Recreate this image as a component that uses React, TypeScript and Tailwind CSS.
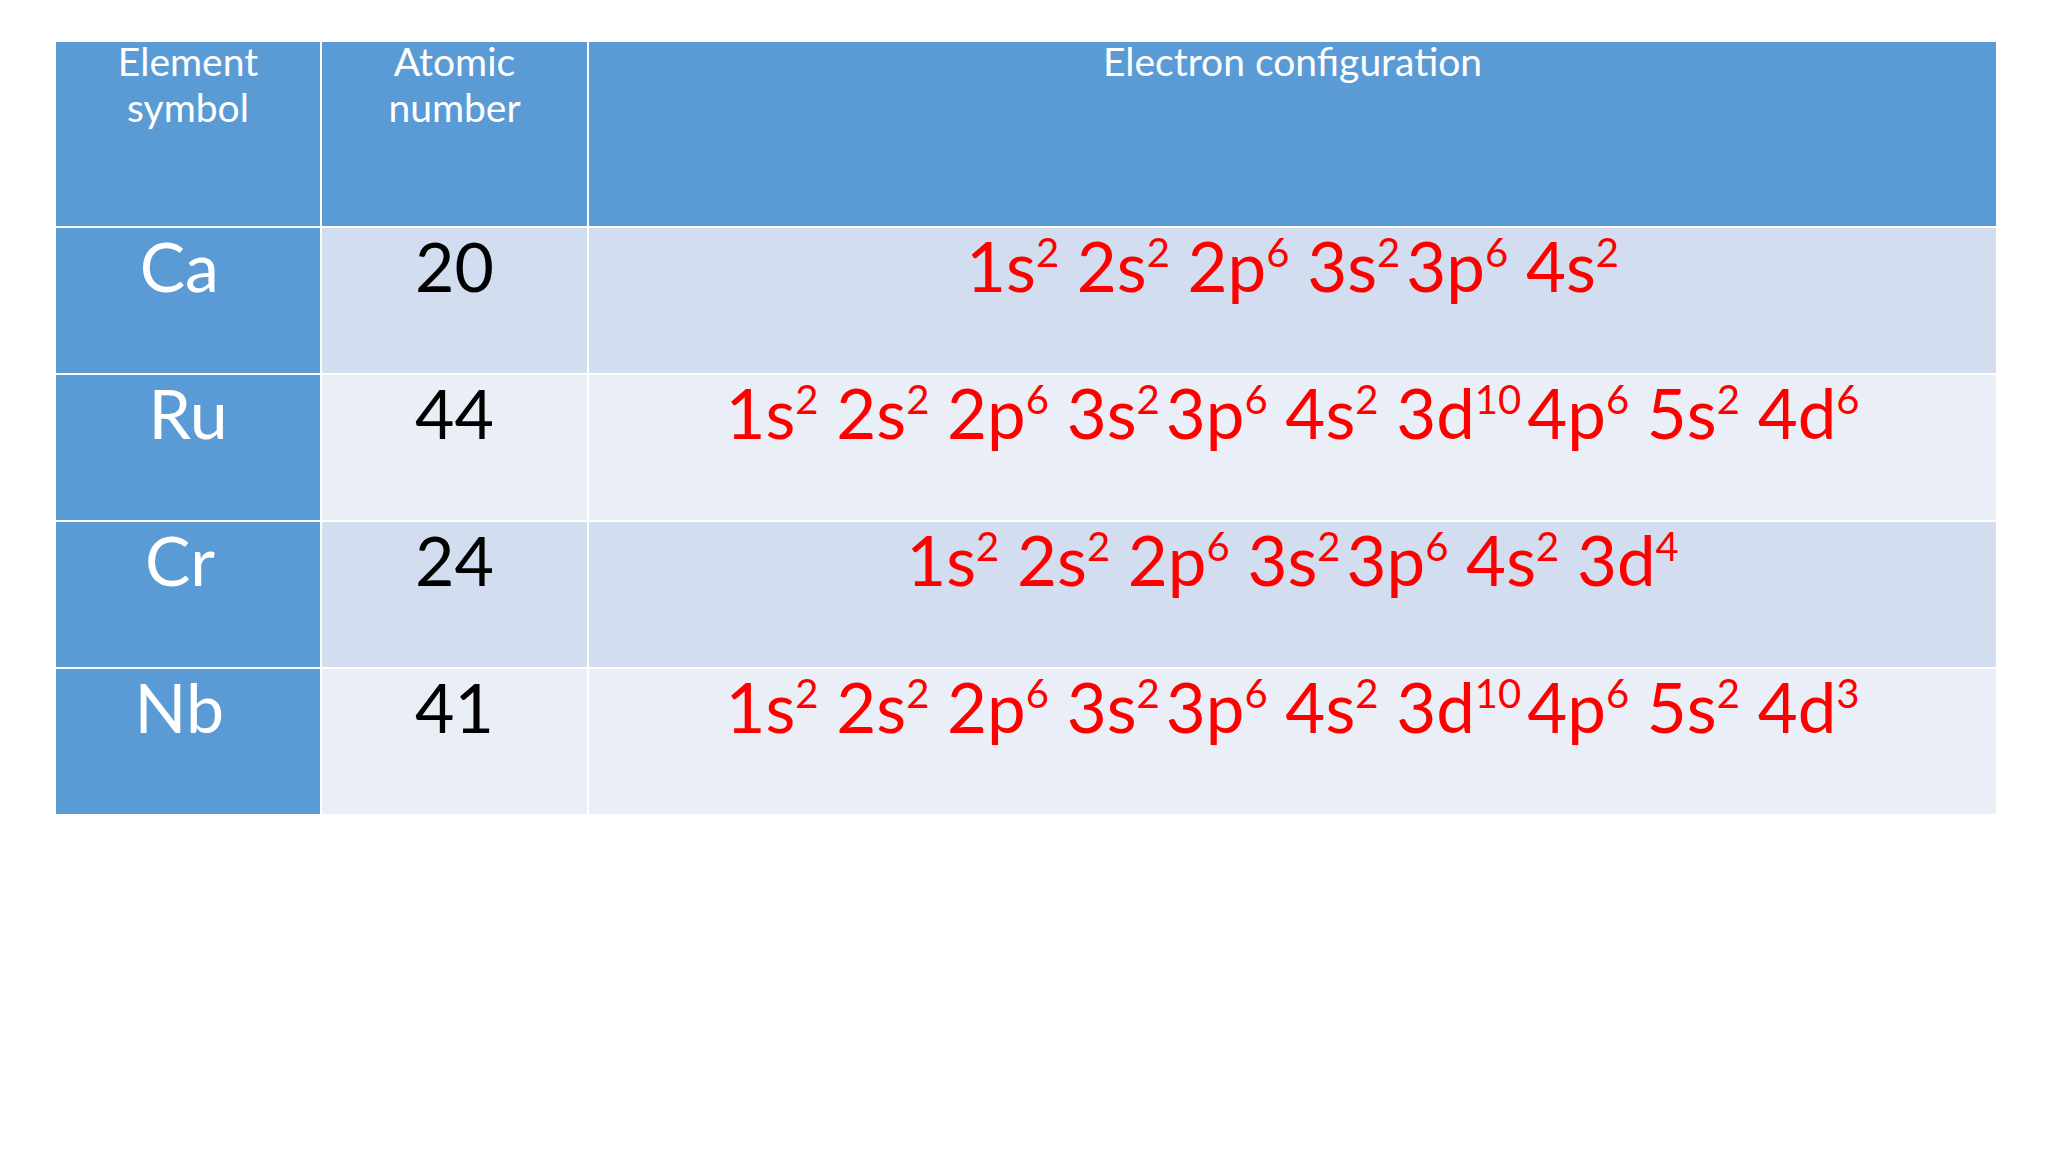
const ROWS = [
  { symbol: 'Ca\u00a0', number: '20', config: [['1s', '2'], ['2s', '2'], ['2p', '6'], ['3s', '2', true], ['3p', '6'], ['4s', '2']] },
  {
    symbol: 'Ru',
    number: '44',
    config: [['1s', '2'], ['2s', '2'], ['2p', '6'], ['3s', '2', true], ['3p', '6'], ['4s', '2'], ['3d', '10', true], ['4p', '6'], ['5s', '2'], ['4d', '6']],
  },
  { symbol: 'Cr\u00a0', number: '24', config: [['1s', '2'], ['2s', '2'], ['2p', '6'], ['3s', '2', true], ['3p', '6'], ['4s', '2'], ['3d', '4']] },
  {
    symbol: 'Nb\u00a0',
    number: '41',
    config: [['1s', '2'], ['2s', '2'], ['2p', '6'], ['3s', '2', true], ['3p', '6'], ['4s', '2'], ['3d', '10', true], ['4p', '6'], ['5s', '2'], ['4d', '3']],
  },
] as const;

function Config({ parts }: { parts: readonly (readonly [string, string] | readonly [string, string, boolean])[] }) {
  return (
    <span>
      {parts.map((p, i) => (
        <span key={i}>
          {p[0]}
          <sup className="relative -top-[0.62em] align-baseline text-[0.58em] leading-none">{p[1]}</sup>
          {i < parts.length - 1 && !p[2] ? ' ' : ''}
          {p[2] ? <span className="inline-block w-[6px]"></span> : null}
        </span>
      ))}
    </span>
  );
}

export default function App() {
  return (
    <div className="min-h-[1152px] w-[2048px] bg-white pt-[42px] pl-[56px] font-['Lato','Open_Sans',sans-serif]">
      <div className="grid w-[1940px] grid-cols-[264px_265px_1407px] grid-rows-[184px_145px_145px_145px_145px] gap-[2px] bg-white">
        <div className="bg-[#5b9bd5] text-center text-[39px] leading-[46px] text-white">
          <div className="-mt-[4px]">
            Element
            <br />
            symbol
          </div>
        </div>
        <div className="bg-[#5b9bd5] text-center text-[39px] leading-[46px] text-white">
          <div className="-mt-[4px]">
            Atomic
            <br />
            number
          </div>
        </div>
        <div className="bg-[#5b9bd5] text-center text-[39px] leading-[46px] text-white">
          <div className="-mt-[4px]">Electron configuration</div>
        </div>

        {ROWS.map((row, i) => {
          const shade = i % 2 === 0 ? 'bg-[#d2deef]' : 'bg-[#eaeff7]';
          return (
            <div key={row.symbol} className="contents">
              <div className="bg-[#5b9bd5] text-center text-[68px] leading-[76px] text-white">{row.symbol}</div>
              <div className={`${shade} text-center text-[68px] leading-[76px] text-black`}>{row.number}</div>
              <div className={`${shade} text-center text-[69px] leading-[76px] whitespace-nowrap text-[#ff0000]`}>
                <Config parts={row.config} />
              </div>
            </div>
          );
        })}
      </div>
    </div>
  );
}
